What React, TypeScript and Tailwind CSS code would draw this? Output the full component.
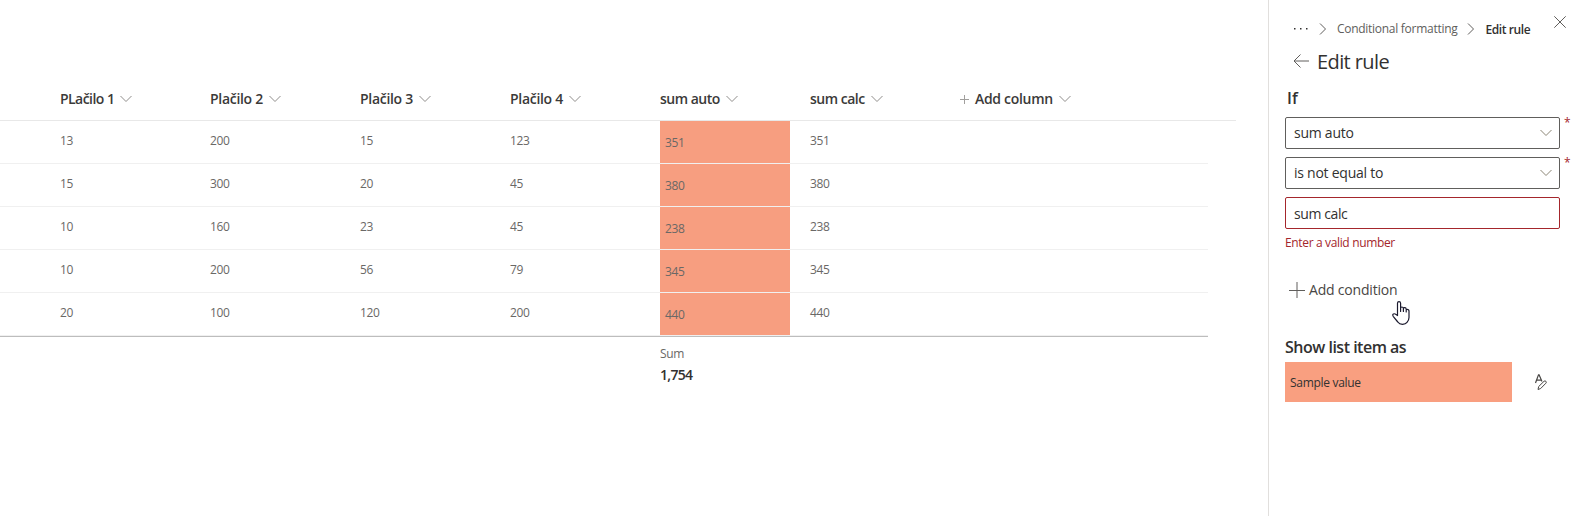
import clsx from 'clsx'

const columns = [
  { name: 'PLačilo 1', tracking: 'tracking-[-0.55px]' },
  { name: 'Plačilo 2', tracking: 'tracking-[-0.3px]' },
  { name: 'Plačilo 3', tracking: 'tracking-[-0.3px]' },
  { name: 'Plačilo 4', tracking: 'tracking-[-0.3px]' },
  { name: 'sum auto', tracking: 'tracking-[-0.5px]' },
  { name: 'sum calc', tracking: 'tracking-[-0.5px]' },
]

const rows = [
  [13, 200, 15, 123, 351, 351],
  [15, 300, 20, 45, 380, 380],
  [10, 160, 23, 45, 238, 238],
  [10, 200, 56, 79, 345, 345],
  [20, 100, 120, 200, 440, 440],
]

const SUM_AUTO = 4

function ChevronDown({ className }: { className?: string }) {
  return (
    <svg viewBox="0 0 12 8" className={clsx('h-2 w-3 shrink-0', className)} fill="none" stroke="currentColor">
      <path d="M.5 1 6 6.5 11.5 1" />
    </svg>
  )
}

function ChevronRight() {
  return (
    <svg viewBox="0 0 8 14" className="h-3.5 w-2 shrink-0 text-[#605e5c]" fill="none" stroke="currentColor">
      <path d="M1 1.5 6.5 7 1 12.5" />
    </svg>
  )
}

function ListView() {
  return (
    <main className="w-[1268px] shrink-0 pt-[78px]">
      <div className="flex h-[43px] w-[1236px] items-center border-b border-[#e8e8e8] pb-0.5 pl-[60px] text-[14px] font-semibold text-[#3b3a39]">
        {columns.map(({ name, tracking }) => (
          <div key={name} className="flex w-[150px] items-center gap-1.5 whitespace-nowrap">
            <span className={tracking}>{name}</span>
            <ChevronDown className="mt-0.5 text-[#8f8d8b]" />
          </div>
        ))}
        <div className="flex items-center gap-1.5 whitespace-nowrap">
          <svg viewBox="0 0 9 9" className="mt-0.5 h-[9px] w-[9px]" stroke="#a19f9d">
            <path d="M0 4.5h9M4.5 0v9" />
          </svg>
          <span className="tracking-[-0.3px]">Add column</span>
          <ChevronDown className="mt-0.5 text-[#8f8d8b]" />
        </div>
      </div>

      <div className="w-[1208px] border-b border-[#bdbdbd] text-[12px] tracking-[-0.4px] text-[#6a6866]">
        {rows.map((row, i) => (
          <div key={i} className="flex h-[43px] border-b border-[#f0f0f0] pl-[60px]">
            {row.map((value, col) => (
              <div key={col} className="w-[150px] leading-[40px]">
                {col === SUM_AUTO ? (
                  <div className="h-[42px] w-[130px] bg-[#f79e80] pl-[5px] leading-[44px]">{value}</div>
                ) : (
                  value
                )}
              </div>
            ))}
          </div>
        ))}
      </div>

      {/* column totals */}
      <div className="pt-[9px] pl-[660px]">
        <div className="text-[12px] leading-4 tracking-[-0.3px] text-[#6a6866]">Sum</div>
        <div className="mt-[3px] text-[14px] leading-5 font-semibold tracking-[-0.7px] text-[#323130]">1,754</div>
      </div>
    </main>
  )
}

function Dropdown({ value }: { value: string }) {
  return (
    <div className="mb-2 flex">
      <div className="flex h-8 w-[275px] items-center justify-between rounded-[2px] border border-[#605e5c] pr-[7px] pl-2">
        <span className="pb-px tracking-[-0.25px]">{value}</span>
        <ChevronDown className="text-[#8a8474]" />
      </div>
      <span className="ml-[4px] h-4 text-[12px] leading-3 text-[#a4262c]">*</span>
    </div>
  )
}

function RulePanel() {
  return (
    <aside className="relative h-[516px] flex-1 border-l border-[#e1dfdd] pl-4 text-[14px] whitespace-nowrap text-[#323130]">
      <button className="absolute top-4 right-[15px]">
        <svg viewBox="0 0 12 12" className="h-3 w-3" fill="none" stroke="#605e5c">
          <path d="M.3.3l11.4 11.4M11.7.3.3 11.7" />
        </svg>
      </button>

      <nav className="mt-[19px] flex h-5 items-center pl-2">
        <svg viewBox="0 0 16 4" className="mr-2.5 h-1 w-4 shrink-0" fill="#323130">
          <path d="M1 1h1.5v1.5H1zM7 1h1.5v1.5H7zM13 1h1.5v1.5H13z" />
        </svg>
        <ChevronRight />
        <span className="ml-2.5 text-[12px] tracking-[-0.28px] text-[#605e5c]">Conditional formatting</span>
        <span className="ml-2.5 flex">
          <ChevronRight />
        </span>
        <span className="ml-2.5 pt-0.5 text-[12px] font-semibold tracking-[-0.4px]">Edit rule</span>
      </nav>

      <div className="mt-[9px] flex h-7 items-center pl-2">
        <svg viewBox="0 0 16 14" className="mb-0.5 h-3.5 w-4" fill="none" stroke="#605e5c">
          <path d="M16 7H1M7.5.5 1 7l6.5 6.5" />
        </svg>
        <h1 className="ml-2 text-[20px] leading-7 tracking-[-0.6px]">Edit rule</h1>
      </div>

      <h2 className="mt-[11px] ml-[2px] h-[30px] text-[16px] leading-[22px] font-semibold">If</h2>

      <Dropdown value="sum auto" />
      <Dropdown value="is not equal to" />
      <div className="flex h-8 w-[275px] items-center rounded-[2px] border border-[#a4262c] pt-px pl-2 tracking-[-0.4px]">
        sum calc
      </div>
      <p className="mt-[6px] text-[12px] leading-4 tracking-[-0.35px] text-[#a4262c]">Enter a valid number</p>

      <button className="mt-[29px] flex h-5 items-center gap-1 pl-1">
        <svg viewBox="0 0 16 16" className="h-4 w-4" stroke="#605e5c">
          <path d="M0 8.5h16M8 0v16" />
        </svg>
        <span className="pb-px tracking-[-0.2px] text-[#484644]">Add condition</span>
      </button>

      <h2 className="mt-[36px] text-[16px] leading-[22px] font-semibold tracking-[-0.5px]">Show list item as</h2>
      <div className="mt-1 flex items-center">
        <div className="h-10 w-[227px] bg-[#f99f80] pl-[5px] text-[12px] leading-[42px] tracking-[-0.3px]">
          Sample value
        </div>
        <svg viewBox="0 0 12 16" className="ml-[23px] h-4 w-3" fill="none" stroke="#484644">
          <path d="M.5 9 3.5.8h.6L7 7.500M1.500 6.200h4.500" strokeWidth="1.2" />
          <path d="m3 15.500.7-3L9 7.300q1-.9 1.900 0t0 1.900L5.700 14.500z" />
        </svg>
      </div>

      {/* pointer */}
      <svg
        viewBox="0 0 18 24"
        className="absolute top-[301px] left-[123px] h-6 w-[18px]"
        fill="white"
        stroke="#1b1a2e"
        strokeWidth="1.2"
        strokeLinejoin="round"
        strokeLinecap="round"
      >
        <path d="M5.5 14.500V2.200Q5.500.6 7 .6t1.600 1.600v8.300V7q0-1 1.300-1t1.500 1.200v3.300V7.500q.1-.9 1.400-.8t1.400 1.300v3V8.700q1.200-.6 2.200.1.600.5.600 1.500v6.200q0 2.600-2 4.900-1.400 1.900-4.500 1.900-3.100 0-4.700-2.300L1.200 15.300q-1-1.600.2-2.300 1.300-.7 2.700.6z" />
      </svg>
    </aside>
  )
}

export default function App() {
  return (
    <div className="flex h-[516px] w-[1581px] overflow-hidden bg-white font-['Open_Sans','Noto_Sans',sans-serif]">
      <ListView />
      <RulePanel />
    </div>
  )
}
